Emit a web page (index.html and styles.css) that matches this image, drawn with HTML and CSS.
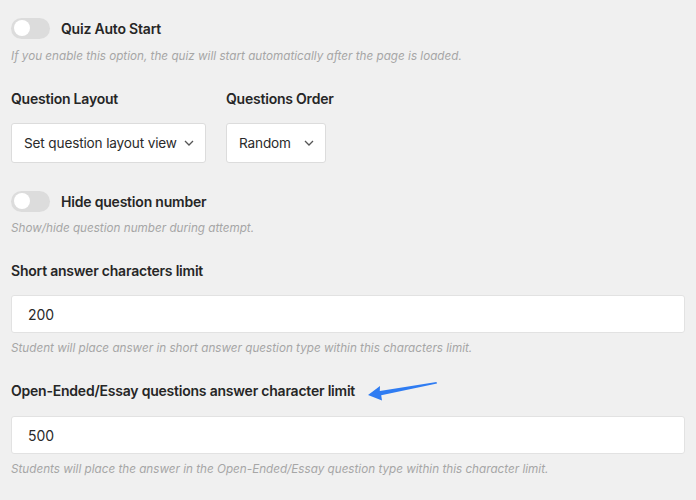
FILE: index.html
```html
<!DOCTYPE html>
<html>
<head>
<meta charset="utf-8">
<link rel="stylesheet" href="styles.css">
</head>
<body>
<div class="page">
  <div class="toggle-row">
    <span class="toggle"><span class="knob"></span></span>
    <span class="toggle-title">Quiz Auto Start</span>
  </div>
  <p class="desc desc-first">If you enable this option, the quiz will start automatically after the page is loaded.</p>

  <div class="select-row">
    <div class="field">
      <div class="label">Question Layout</div>
      <div class="select select-layout">
        <span class="select-text">Set question layout view</span>
        <svg class="chev" width="10" height="6" viewBox="0 0 10 6"><path d="M1 1l4 4 4-4" fill="none" stroke="#555" stroke-width="1.3"/></svg>
      </div>
    </div>
    <div class="field">
      <div class="label">Questions Order</div>
      <div class="select select-order">
        <span class="select-text">Random</span>
        <svg class="chev" width="10" height="6" viewBox="0 0 10 6"><path d="M1 1l4 4 4-4" fill="none" stroke="#555" stroke-width="1.3"/></svg>
      </div>
    </div>
  </div>

  <div class="toggle-row toggle-second">
    <span class="toggle"><span class="knob"></span></span>
    <span class="toggle-title">Hide question number</span>
  </div>
  <p class="desc desc-second">Show/hide question number during attempt.</p>

  <div class="label label-block">Short answer characters limit</div>
  <div class="input">200</div>
  <p class="desc desc-input">Student will place answer in short answer question type within this characters limit.</p>

  <div class="label label-block label-arrow">Open-Ended/Essay questions answer character limit
    <svg class="arrow" width="74" height="22" viewBox="0 0 74 22">
      <path d="M1 14 L13 5 L12.8 10 L69.5 1 L70 2.6 L14.2 14.2 L15 19.5 Z" fill="#2f7cf2"/>
    </svg>
  </div>
  <div class="input input-second">500</div>
  <p class="desc desc-input">Students will place the answer in the Open-Ended/Essay question type within this character limit.</p>
</div>
</body>
</html>
```

FILE: styles.css
```css
* { box-sizing: border-box; }
html, body { margin: 0; padding: 0; }
body {
  background: #f0f0f0;
  font-family: Inter, "Liberation Sans", Arial, sans-serif;
  color: #262626;
}
.page {
  padding: 16px 11px 0 11px;
}
.toggle-row {
  display: flex;
  align-items: center;
  gap: 11px;
  height: 24px;
}
.toggle {
  width: 39px;
  height: 21px;
  border-radius: 11px;
  background: #dcdcdc;
  position: relative;
  flex: none;
}
.knob {
  position: absolute;
  left: 3px;
  top: 2.5px;
  width: 16px;
  height: 16px;
  border-radius: 50%;
  background: #fff;
}
.toggle-title {
  font-size: 14px;
  font-weight: 600;
  letter-spacing: -0.2px;
  color: #262626;
}
.desc {
  margin: 0;
  font-size: 11.7px;
  line-height: 16px;
  font-style: italic;
  color: #a6a6a6;
}
.desc-first { margin-top: 8px; }
.desc-second { margin-top: 7px; }
.desc-input { margin-top: 7px; }
.select-row {
  display: flex;
  gap: 20px;
  margin-top: 26px;
}
.label {
  font-size: 14px;
  font-weight: 600;
  line-height: 18px;
  letter-spacing: -0.22px;
  color: #262626;
}
.select {
  margin-top: 15px;
  height: 40px;
  background: #fff;
  border: 1px solid #dcdcdc;
  border-radius: 3px;
  display: flex;
  align-items: center;
  justify-content: space-between;
  padding: 0 11px 0 12px;
  font-size: 13.6px;
  color: #2a2a2a;
}
.select-text {
  white-space: nowrap;
  letter-spacing: -0.15px;
}
.select-layout { width: 195px; }
.select-order { width: 100px; }
.chev { flex: none; }
.toggle-second { margin-top: 26px; }
.label-block { margin-top: 26px; }
.label-arrow { position: relative; }
.arrow {
  position: absolute;
  left: 356px;
  top: -1px;
}
.input {
  margin-top: 15px;
  width: 674px;
  height: 38px;
  background: #fff;
  border: 1px solid #e2e2e2;
  border-radius: 3px;
  display: flex;
  align-items: center;
  padding-left: 16px;
  font-size: 14px;
  color: #2a2a2a;
}
.input-second { margin-top: 16px; }
```
